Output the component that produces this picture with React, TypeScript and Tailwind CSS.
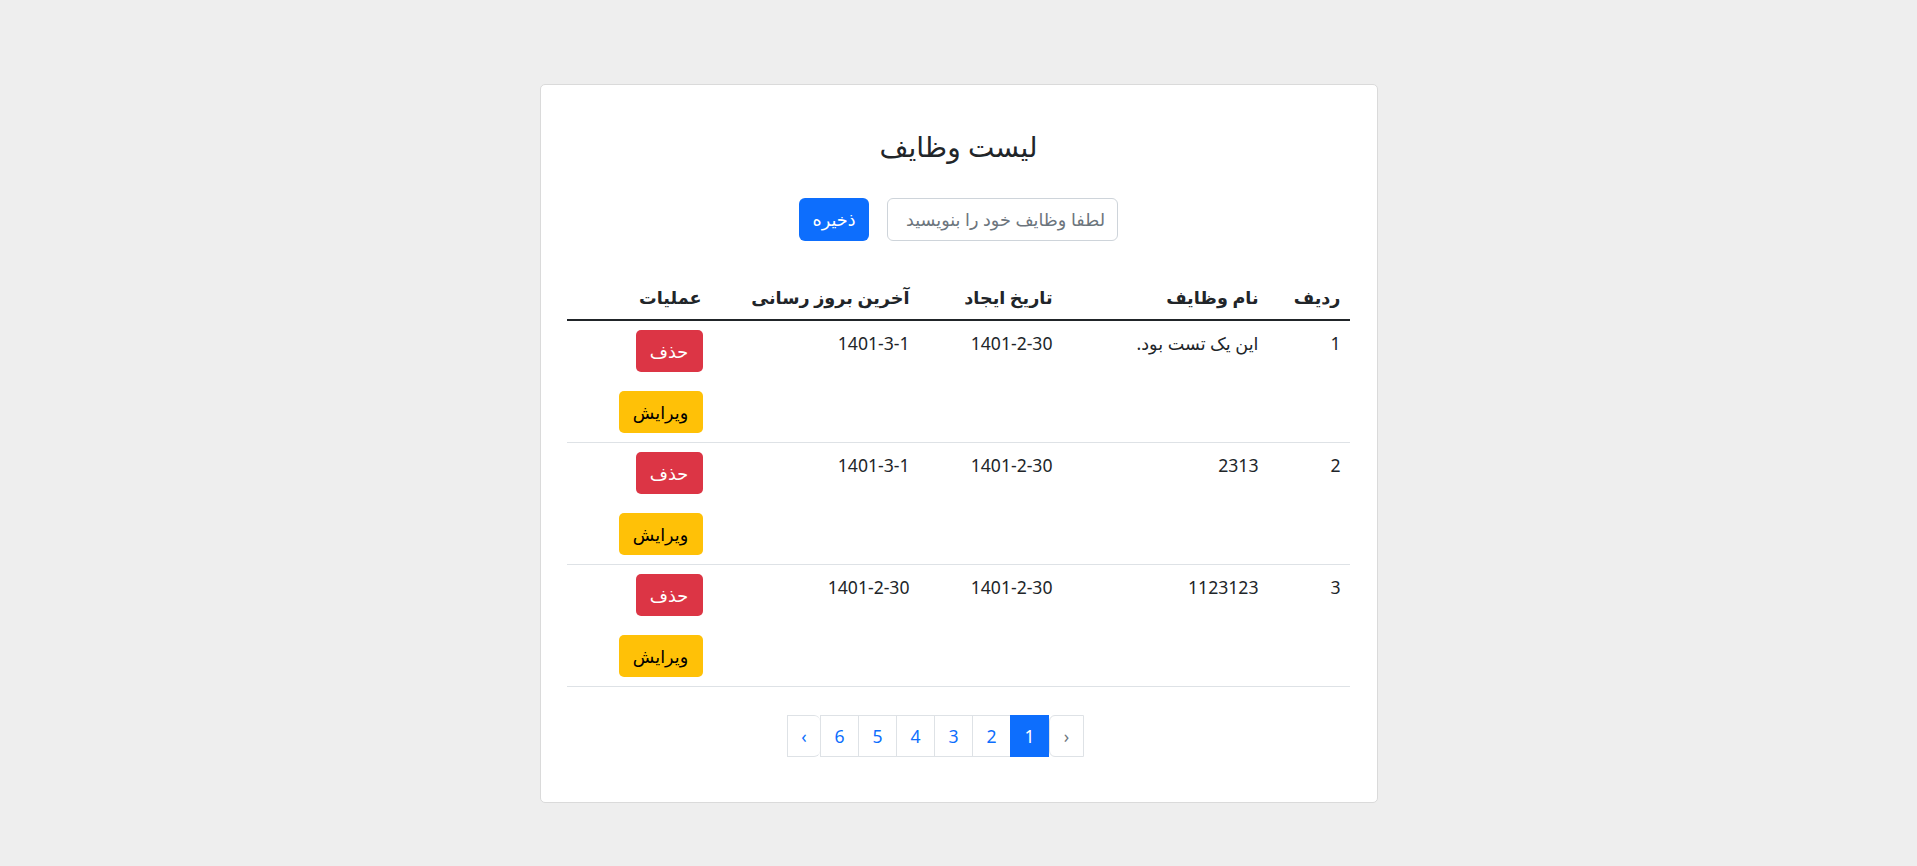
import { useState } from "react";

type Task = {
  id: number;
  title: string;
  created: string;
  updated: string;
};

const tasks: Task[] = [
  { id: 1, title: "این یک تست بود.", created: "1401-2-30", updated: "1401-3-1" },
  { id: 2, title: "2313", created: "1401-2-30", updated: "1401-3-1" },
  { id: 3, title: "1123123", created: "1401-2-30", updated: "1401-2-30" },
];

const pages = [1, 2, 3, 4, 5, 6];

export default function App() {
  const [text, setText] = useState("");
  const [page, setPage] = useState(1);

  return (
    <div
      dir="rtl"
      className="min-h-screen bg-[#eeeeee] pt-[84px] pb-[61px] text-[17.6px] leading-[1.5] text-[#212529] font-['Noto_Sans','DejaVu_Sans',sans-serif]"
    >
      <div className="mx-auto w-[838px] bg-white border border-[#dadada] rounded-[5px] px-[27px] pt-[45px] pb-[45px]">
        <h1 className="text-center text-[28px] leading-[1.2] font-medium">
          لیست وظایف
        </h1>

        {/* Add task form */}
        <div className="mt-[34px] flex justify-center gap-[18px]">
          <input
            type="text"
            value={text}
            onChange={(e) => setText(e.target.value)}
            placeholder="لطفا وظایف خود را بنویسید"
            className="w-[231px] h-[43px] px-[12px] border border-[#ced4da] rounded-[6px] bg-white text-[17.6px] placeholder:text-[#6c757d] outline-none"
          />
          <button className="w-[70px] h-[43px] rounded-[6px] bg-[#0d6efd] text-white">
            ذخیره
          </button>
        </div>

        <table className="mt-[34px] w-full table-fixed border-collapse">
          <thead>
            <tr className="border-b-2 border-[#212529]">
              <th className="w-[82px] px-[9px] py-[9px] text-right font-bold">ردیف</th>
              <th className="w-[206px] px-[9px] py-[9px] text-right font-bold">نام وظایف</th>
              <th className="w-[143px] px-[9px] py-[9px] text-right font-bold">تاریخ ایجاد</th>
              <th className="w-[208px] px-[9px] py-[9px] text-right font-bold">آخرین بروز رسانی</th>
              <th className="w-[144px] px-[9px] py-[9px] text-right font-bold">عملیات</th>
            </tr>
          </thead>
          <tbody>
            {tasks.map((task) => (
              <tr key={task.id} className="border-b border-[#dee2e6] align-top">
                <td className="px-[9px] py-[9px]">{task.id}</td>
                <td className="px-[9px] py-[9px]">{task.title}</td>
                <td className="px-[9px] py-[9px]">{task.created}</td>
                <td className="px-[9px] py-[9px]">{task.updated}</td>
                <td className="px-[8px] py-[9px]">
                  <div className="flex flex-col items-start gap-[19px]">
                    <button className="w-[67px] h-[42px] rounded-[5px] bg-[#dc3545] text-white">
                      حذف
                    </button>
                    <button className="w-[84px] h-[42px] rounded-[5px] bg-[#ffc107] text-black">
                      ویرایش
                    </button>
                  </div>
                </td>
              </tr>
            ))}
          </tbody>
        </table>

        {/* Pagination (chevrons get mirrored by rtl) */}
        <div className="mt-[28px] flex justify-center pr-[46px]">
          <button className="w-[35px] h-[42px] border border-[#dee2e6] rounded-l-[6px] text-[#6c757d]">
            ‹
          </button>
          {pages.map((p) => (
            <button
              key={p}
              onClick={() => setPage(p)}
              className={
                p === page
                  ? "w-[39px] h-[42px] border border-[#0d6efd] bg-[#0d6efd] text-white"
                  : "w-[38px] h-[42px] border border-r-0 border-[#dee2e6] text-[#0d6efd]"
              }
            >
              {p}
            </button>
          ))}
          <button className="w-[33px] h-[42px] border border-r-0 border-[#dee2e6] rounded-r-[6px] text-[#0d6efd]">
            ›
          </button>
        </div>
      </div>
    </div>
  );
}
